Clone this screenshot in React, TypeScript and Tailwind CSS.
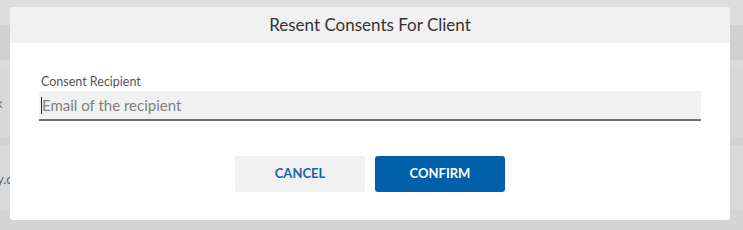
import React from "react";

export default function App() {
  return (
    <div
      className="relative w-[743px] h-[230px] overflow-hidden bg-[#dcdcdc]"
      style={{ fontFamily: "Lato, 'Open Sans', sans-serif" }}
    >
      {/* page behind overlay */}
      <div className="flex flex-col">
        <div className="h-[25px] bg-[#dddddd]" />
        <div className="h-[35px] bg-[#d0d0d0]" />
        <div className="h-[8px] bg-[#dadada]" />
        <div className="h-[69px] bg-[#d8d8d8] flex items-center pt-[2px]">
          <span className="ml-[-4px] text-[13px] text-[#7a6a5a]">k</span>
        </div>
        <div className="h-[8px] bg-[#d2d2d2]" />
        <div className="h-[65px] bg-[#d9d9d9] flex items-center pt-[4px]">
          <span className="ml-[-3px] text-[13px] text-[#5a6470]">y.c</span>
        </div>
        <div className="h-[20px] bg-[#d4d4d4]" />
      </div>

      {/* modal */}
      <div className="absolute left-[10px] top-[7px] w-[720px] h-[213px] bg-white rounded-[3px] overflow-hidden flex flex-col">
        <div className="h-[36px] bg-[#f1f1f1] flex items-center justify-center">
          <span className="text-[17px] text-[#333333]">Resent Consents For Client</span>
        </div>
        <div className="px-[29px] pt-[31px]">
          <div className="text-[12.5px] leading-[15px] text-[#555555] pl-[2px]">Consent Recipient</div>
          <div className="mt-[2px] h-[30px] bg-[#f1f1f1] border-b-2 border-[#707070] flex items-center pl-[2px]">
            <span className="w-px h-[17px] bg-[#222222]" />
            <span className="text-[15px] text-[#808080]">Email of the recipient</span>
          </div>
        </div>
        <div className="mt-[35px] flex justify-center gap-[10px]">
          <button className="w-[130px] h-[36px] rounded-[3px] bg-[#f1f1f1] text-[#1b62a8] text-[13px] font-bold">
            CANCEL
          </button>
          <button className="w-[130px] h-[36px] rounded-[3px] bg-[#0060a9] text-white text-[13px] font-bold">
            CONFIRM
          </button>
        </div>
      </div>
    </div>
  );
}
